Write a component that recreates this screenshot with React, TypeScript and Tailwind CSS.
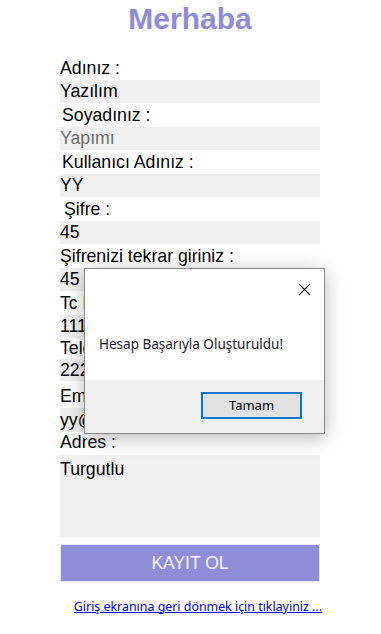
import React from 'react'

const sans = { fontFamily: '"Liberation Sans", Arial, sans-serif' }
const ui = { fontFamily: '"Noto Sans", "DejaVu Sans", sans-serif' }

function Label({ text, h = 'h-[24px]', extra = '' }: { text: string; h?: string; extra?: string }) {
  return <div className={`${h} ${extra} flex items-center text-[17.7px] text-black whitespace-nowrap`}>{text}</div>
}

function Field({ value, muted = false, h = 'h-[23px]' }: { value: string; muted?: boolean; h?: string }) {
  return (
    <div className={`${h} flex items-center bg-[#f0f0f0] text-[17.7px] ${muted ? 'text-[#6d6d6d]' : 'text-black'}`}>
      {value}
    </div>
  )
}

export default function App() {
  return (
    <div className="relative w-[381px] h-[634px] bg-white overflow-hidden" style={sans}>
      {/* Başlık */}
      <h1 className="h-[38px] leading-[38px] text-center text-[30px] font-bold text-[#8f8bd9] pr-[1px]">Merhaba</h1>

      {/* Form */}
      <div className="ml-[60px] w-[260px] mt-[18px] flex flex-col">
        <Label text="Adınız :" />
        <Field value="Yazılım" />
        <Label text="Soyadınız :" extra="pl-[2px]" />
        <Field value="Yapımı" muted />
        <Label text="Kullanıcı Adınız :" extra="pl-[2px]" />
        <Field value="YY" />
        <Label text="Şifre :" extra="pl-[4px]" />
        <Field value="45" />
        <Label text="Şifrenizi tekrar giriniz :" />
        <Field value="45" />
        <Label text="Tc Kimlik No :" />
        <Field value="11111111111" />
        <Label text="Telefon :" h="h-[21px]" />
        <Field value="2222222222" h="h-[22px]" />
        <Label text="Email :" extra="mt-[3px]" />
        <Field value="yy@gmail.com" h="h-[24px]" />
        <Label text="Adres :" h="h-[21px]" />
        <div className="mt-[2px] h-[82px] bg-[#f0f0f0] text-[17.7px] text-black pt-[1px]">Turgutlu</div>

        <button className="mt-[7px] h-[38px] w-full bg-[#8f8cd8] text-[17.5px] text-[#f4f4fb] border border-[#e8e8f8]">
          KAYIT OL
        </button>

        <div className="mt-[15px] h-[20px] flex items-center justify-end -mr-[2px]">
          <a href="#" className="text-[12.4px] text-[#0000ff] underline" style={ui}>
            Giriş ekranına geri dönmek için tıklayiniz ...
          </a>
        </div>
      </div>

      {/* Mesaj kutusu */}
      <div
        className="absolute left-[84px] top-[268px] w-[241px] h-[166px] border border-[#8a8a8a] bg-white flex flex-col shadow-[0_4px_18px_rgba(0,0,0,0.28)]"
        style={ui}
      >
        <div className="relative flex-1">
          <svg className="absolute left-[213px] top-[14px]" width="13" height="13" viewBox="0 0 13 13">
            <path d="M1 1L12 12M12 1L1 12" stroke="#111" strokeWidth="1.1" fill="none" />
          </svg>
          <div className="absolute left-[14px] top-[65px] text-[13.5px] text-[#1a1a2a]">Hesap Başarıyla Oluşturuldu!</div>
        </div>
        <div className="h-[53px] bg-[#f0f0f0] flex items-start justify-end pr-[22px] pt-[12px]">
          <button className="w-[101px] h-[27px] border-2 border-[#0078d7] bg-[#e1e1e1] text-[13px] text-black leading-none">
            Tamam
          </button>
        </div>
      </div>
    </div>
  )
}
